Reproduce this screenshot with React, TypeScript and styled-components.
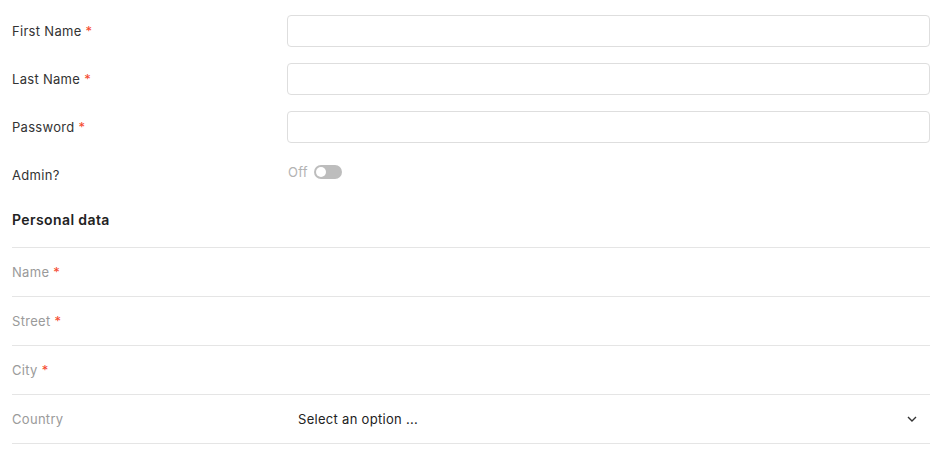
import React from "react";
import styled, { createGlobalStyle } from "styled-components";

const Global = createGlobalStyle`
  html, body { margin: 0; padding: 0; background: #fff; }
  body { font-family: Inter, "Noto Sans", "Liberation Sans", sans-serif; font-size: 13px; color: #333; letter-spacing: 0.3px; }
  * { box-sizing: border-box; }
`;

const Form = styled.div`
  padding: 7px 10px 0 12px;
`;

const Row = styled.div`
  display: grid;
  grid-template-columns: 275px 1fr;
  align-items: center;
  min-height: 48px;
  padding: 8px 0;
`;

const Label = styled.div<{ $muted?: boolean }>`
  color: ${(p) => (p.$muted ? "#9a9a9a" : "#333")};
  font-size: 13px;
`;

const Req = styled.span`
  color: #f5472c;
  margin-left: 4px;
`;

const Input = styled.input`
  height: 32px;
  width: 100%;
  border: 1px solid #dedede;
  border-radius: 4px;
  font: inherit;
  padding: 0 10px;
  outline: none;
`;

const ToggleWrap = styled.div`
  display: flex;
  align-items: center;
  gap: 6px;
  margin-top: -6px;
`;

const OffText = styled.span`
  color: #b3b3b3;
  font-size: 13px;
  margin-left: 1px;
`;

const Toggle = styled.span`
  width: 28px;
  height: 14px;
  border-radius: 7px;
  background: #bdbdbd;
  position: relative;
  display: inline-block;
  &::after {
    content: "";
    position: absolute;
    left: 2px;
    top: 2px;
    width: 10px;
    height: 10px;
    border-radius: 50%;
    background: #fff;
  }
`;

const Heading = styled.div`
  font-size: 14px;
  font-weight: 600;
  color: #222;
  letter-spacing: 0.4px;
  padding: 12px 0 19px;
  line-height: 17px;
  border-bottom: 1px solid #e5e5e5;
`;

const DataRow = styled.div`
  display: grid;
  grid-template-columns: 275px 1fr;
  align-items: center;
  height: 49px;
  border-bottom: 1px solid #e5e5e5;
`;

const Select = styled.div`
  display: flex;
  align-items: center;
  justify-content: space-between;
  padding: 0 13px 0 11px;
  color: #222;
  font-size: 13px;
`;

const Chevron = () => (
  <svg width="10" height="6" viewBox="0 0 10 6" fill="none">
    <path d="M1 1l4 4 4-4" stroke="#333" strokeWidth="1.4" />
  </svg>
);

export default function App() {
  return (
    <Form>
      <Global />
      <Row>
        <Label>First Name<Req>*</Req></Label>
        <Input />
      </Row>
      <Row>
        <Label>Last Name<Req>*</Req></Label>
        <Input />
      </Row>
      <Row>
        <Label>Password<Req>*</Req></Label>
        <Input type="password" />
      </Row>
      <Row>
        <Label>Admin?</Label>
        <ToggleWrap>
          <OffText>Off</OffText>
          <Toggle />
        </ToggleWrap>
      </Row>
      <Heading>Personal data</Heading>
      <DataRow>
        <Label $muted>Name<Req>*</Req></Label>
        <div />
      </DataRow>
      <DataRow>
        <Label $muted>Street<Req>*</Req></Label>
        <div />
      </DataRow>
      <DataRow>
        <Label $muted>City<Req>*</Req></Label>
        <div />
      </DataRow>
      <DataRow>
        <Label $muted>Country</Label>
        <Select>
          <span>Select an option ...</span>
          <Chevron />
        </Select>
      </DataRow>
    </Form>
  );
}
